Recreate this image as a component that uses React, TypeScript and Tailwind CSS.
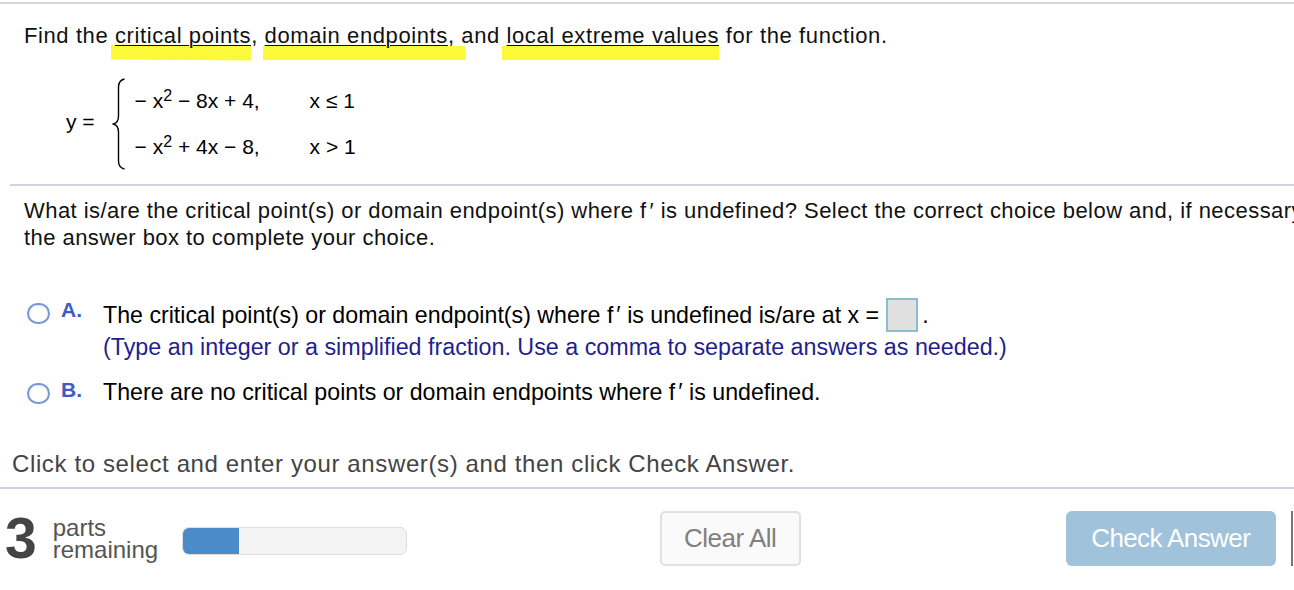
import React from "react";

function Brace() {
  return (
    <svg width="14" height="92" viewBox="0 0 14 92" fill="none" className="ml-[17px] shrink-0">
      <path
        d="M12.5 1 C8 2 6.5 4.5 6.5 9 L6.5 38 C6.5 42.5 5 45 1.5 46 C5 47 6.5 49.5 6.5 54 L6.5 83 C6.5 87.5 8 90 12.5 91"
        stroke="#000"
        strokeWidth="1.4"
      />
    </svg>
  );
}

function Radio({ className }: { className: string }) {
  return (
    <span
      className={`block h-[21px] w-[23px] shrink-0 rounded-full border-[2px] border-[#7398da] bg-white shadow-[inset_0_1px_2px_rgba(0,0,0,0.12)] ${className}`}
    />
  );
}

const Prime = () => <span className="ml-[3px]">′</span>;

export default function App(): React.ReactElement {
  return (
    <div className="h-[590px] w-[1294px] overflow-hidden bg-white font-['Liberation_Sans',Arial,sans-serif] text-black">
      <div className="mt-[2px] h-[2px] bg-[#d3d7e0]" />

      <div className="pl-[24px] pt-[19px]">
        <p className="whitespace-nowrap text-[22px] leading-[26px] tracking-[0.6px] text-[#111]">
          Find the{" "}
          <span className="relative">
            <span className="absolute left-[-4px] right-0 top-[22px] h-[15px] rotate-[0.4deg] bg-[#fcf83a]" />
            <span className="relative underline decoration-1 underline-offset-[2px]">critical points</span>
          </span>
          ,{" "}
          <span className="relative">
            <span className="absolute left-[-2px] right-[-17px] top-[23px] h-[14px] bg-[#fcf83a]" />
            <span className="relative underline decoration-1 underline-offset-[2px]">domain endpoints</span>
          </span>
          , and{" "}
          <span className="relative">
            <span className="absolute left-[-5px] right-0 top-[23px] h-[14px] bg-[#fcf83a]" />
            <span className="relative underline decoration-1 underline-offset-[2px]">local extreme values</span>
          </span>{" "}
          for the function.
        </p>
      </div>

      <div className="mt-[29px] flex h-[92px] items-center pl-[66px] text-[21px]">
        <span className="-mt-[5px] whitespace-nowrap leading-none">y =</span>
        <Brace />
        <div className="ml-[9px] grid grid-cols-[175px_auto] whitespace-nowrap">
          <div className="h-[46px] leading-[46px]">
            − x<span className="align-[7px] text-[16px] leading-none">2</span> − 8x + 4,
          </div>
          <div className="h-[46px] leading-[46px]">x ≤ 1</div>
          <div className="h-[46px] leading-[46px]">
            − x<span className="align-[7px] text-[16px] leading-none">2</span> + 4x − 8,
          </div>
          <div className="h-[46px] leading-[46px]">x &gt; 1</div>
        </div>
      </div>

      <div className="ml-[10px] mt-[14px] h-[2px] bg-[#cfd4de]" />

      <div className="mt-[12px] pl-[24px] text-[22px] leading-[26.5px] tracking-[0.45px] text-[#111]">
        <p className="whitespace-nowrap">
          What is/are the critical point(s) or domain endpoint(s) where f<Prime /> is undefined? Select the correct
          choice below and, if necessary, fill in
        </p>
        <p className="whitespace-nowrap">the answer box to complete your choice.</p>
      </div>

      <div className="mt-[47px] flex items-start pl-[27px]">
        <Radio className="mt-[5px]" />
        <span className="ml-[11px] mt-[1px] w-[42px] text-[21px] font-bold leading-[22px] text-[#3d5cc4]">A.</span>
        <div>
          <div className="flex h-[34px] items-center whitespace-nowrap text-[23.2px] leading-[30px]">
            <span>
              The critical point(s) or domain endpoint(s) where f<Prime /> is undefined is/are at x =
            </span>
            <span className="ml-[7px] h-[34px] w-[32px] border-[2px] border-[#8dbdcc] bg-[#e0e0e0]" />
            <span className="ml-[4px]">.</span>
          </div>
          <p className="whitespace-nowrap text-[23.3px] leading-[30px] text-[#1f1f8f]">
            (Type an integer or a simplified fraction. Use a comma to separate answers as needed.)
          </p>
        </div>
      </div>

      <div className="mt-[15px] flex items-start pl-[27px]">
        <Radio className="mt-[6px]" />
        <span className="ml-[11px] mt-[2px] w-[42px] text-[21px] font-bold leading-[22px] text-[#3d5cc4]">B.</span>
        <p className="whitespace-nowrap text-[23.2px] leading-[30px]">
          There are no critical points or domain endpoints where f<Prime /> is undefined.
        </p>
      </div>

      <p className="mt-[43px] whitespace-nowrap pl-[12px] text-[24px] leading-[28px] tracking-[0.62px] text-[#444]">
        Click to select and enter your answer(s) and then click Check Answer.
      </p>

      <div className="mt-[9px] h-[2px] bg-[#cdd3de]" />

      <div className="mt-[22px] flex h-[55px] items-center pl-[5px]">
        <span className="text-[57px] font-bold leading-none text-[#444]">3</span>
        <div className="ml-[16px] w-[107px] text-[24px] leading-[22px] text-[#555]">
          <div>parts</div>
          <div>remaining</div>
        </div>
        <div className="ml-[22px] mt-[5px] h-[28px] w-[225px] overflow-hidden rounded-[7px] border border-[#dedede] bg-[#f3f3f3]">
          <div className="h-full w-[56px] bg-[#4a8bc9]" />
        </div>
        <button className="ml-[253px] h-[55px] w-[141px] rounded-[5px] border-[2px] border-[#e0e0e0] bg-[#fafafa] text-[26px] tracking-[-0.5px] text-[#808080]">
          Clear All
        </button>
        <button className="ml-[265px] h-[55px] w-[210px] rounded-[6px] bg-[#a0c2da] text-[26px] tracking-[-0.6px] text-white">
          Check Answer
        </button>
        <div className="ml-[15px] h-[55px] w-[2px] bg-[#777]" />
      </div>
    </div>
  );
}
